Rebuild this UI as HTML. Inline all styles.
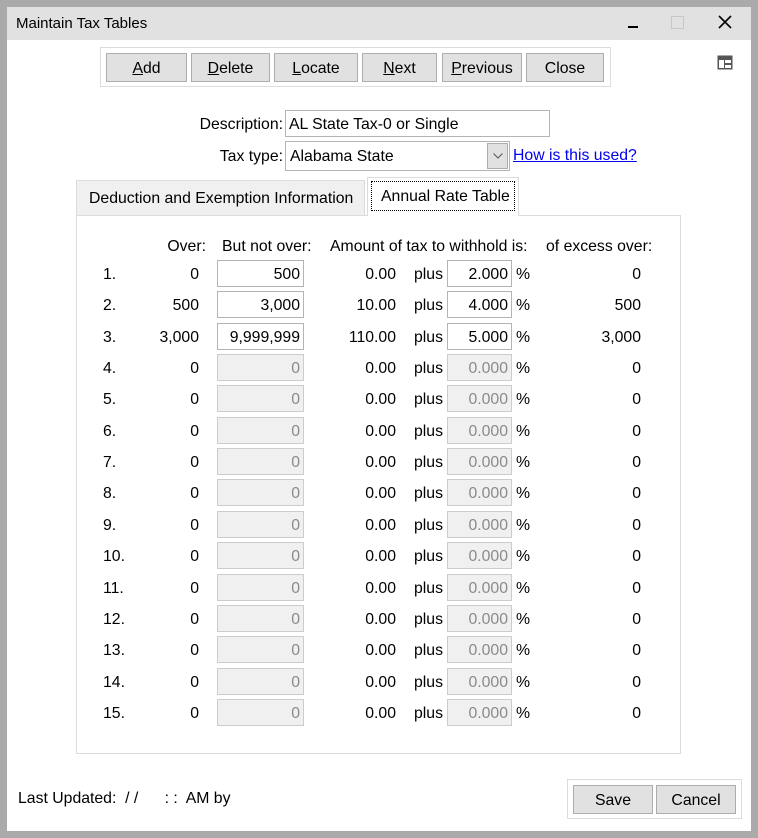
<!DOCTYPE html>
<html><head><meta charset="utf-8"><style>
*{box-sizing:border-box;margin:0;padding:0}
body{width:758px;height:838px;background:#aaaaaa;font-family:"Liberation Sans",sans-serif;font-size:15.8px;color:#000;position:relative;overflow:hidden}
.a{position:absolute;white-space:nowrap}
#win{position:absolute;left:7px;top:7px;width:744px;height:824px;background:#fff}
#title{position:absolute;left:7px;top:7px;width:744px;height:33px;background:#e1e1e1}
.btn{position:absolute;top:53px;height:29px;background:#e1e1e1;border:1px solid #adadad;text-align:center;line-height:30px}
.box{position:absolute;border:1px solid #dcdcdc}
.in{position:absolute;height:27px;border:1px solid #b4b4b4;background:#fff;text-align:right;padding-right:3px;line-height:27px}
.dis{background:#f0f0f0;border-color:#cccccc;color:#8a8a8a}
.r{text-align:right}
</style></head><body>
<div id="win"></div>
<div id="title"></div>
<div class="a" style="left:16px;top:15px;font-size:15px">Maintain Tax Tables</div>
<div class="a" style="left:628px;top:26px;width:10px;height:2px;background:#000"></div>
<div class="a" style="left:671px;top:16px;width:13px;height:13px;border:1px solid #c8c8c8"></div>
<svg class="a" style="left:718px;top:15px" width="14" height="14"><path d="M1 1L13 13M13 1L1 13" stroke="#000" stroke-width="1.6"/></svg>

<div class="box" style="left:100px;top:47px;width:511px;height:40px"></div>
<div class="btn" style="left:106px;width:81px"><u>A</u>dd</div>
<div class="btn" style="left:191px;width:79px"><u>D</u>elete</div>
<div class="btn" style="left:274px;width:84px"><u>L</u>ocate</div>
<div class="btn" style="left:362px;width:75px"><u>N</u>ext</div>
<div class="btn" style="left:442px;width:80px"><u>P</u>revious</div>
<div class="btn" style="left:526px;width:78px">Close</div>
<svg class="a" style="left:717px;top:55px" width="16" height="15"><rect x="0.5" y="0.5" width="15" height="14" fill="#555"/><rect x="2" y="5" width="5" height="8" fill="#fff"/><rect x="8" y="5" width="6" height="3" fill="#fff"/><rect x="8" y="10" width="6" height="3" fill="#fff"/></svg>

<div class="a r" style="left:150px;width:133px;top:116px">Description:</div>
<div class="in" style="left:285px;top:110px;width:265px;text-align:left;padding-left:3px">AL State Tax-0 or Single</div>
<div class="a r" style="left:150px;width:133px;top:148px">Tax type:</div>
<div class="in" style="left:285px;top:141px;width:225px;height:30px;text-align:left;padding-left:4px;line-height:30px">Alabama State</div>
<div class="a" style="left:487px;top:143px;width:21px;height:26px;background:#e1e1e1;border:1px solid #adadad"></div>
<svg class="a" style="left:493px;top:153px" width="10" height="6"><path d="M0.5 0.5L5 5L9.5 0.5" stroke="#555" fill="none"/></svg>
<div class="a" style="left:513px;top:147px;color:#0000ee;text-decoration:underline">How is this used?</div>

<div class="a" style="left:76px;top:180px;width:289px;height:36px;background:#f0f0f0;border:1px solid #dcdcdc"></div>
<div class="a" style="left:89px;top:190px">Deduction and Exemption Information</div>
<div class="box" style="left:76px;top:215px;width:605px;height:539px"></div>
<div class="a" style="left:367px;top:177px;width:152px;height:39px;background:#fff;border:1px solid #dcdcdc;border-bottom:none"></div>
<div class="a" style="left:371px;top:181px;width:144px;height:30px;border:1px dotted #000"></div>
<div class="a" style="left:381px;top:188px">Annual Rate Table</div>

<div class="a r" style="left:140px;width:66px;top:238px">Over:</div>
<div class="a" style="left:222px;top:238px">But not over:</div>
<div class="a" style="left:330px;top:238px">Amount of tax to withhold is:</div>
<div class="a" style="left:546px;top:238px">of excess over:</div>

<div id="rows"></div>
<script>
var d=[["0","500","0.00","2.000","0"],["500","3,000","10.00","4.000","500"],["3,000","9,999,999","110.00","5.000","3,000"]];
var h="";
for(var i=0;i<15;i++){var t=266+i*31.35,y=260+i*31.35;var r=d[i]||["0","0","0.00","0.000","0"];var c=i<3?"":" dis";
h+='<div class="a" style="left:103px;top:'+t+'px">'+(i+1)+'.</div>';
h+='<div class="a r" style="left:120px;width:79px;top:'+t+'px">'+r[0]+'</div>';
h+='<div class="in'+c+'" style="left:217px;top:'+y+'px;width:87px">'+r[1]+'</div>';
h+='<div class="a r" style="left:320px;width:76px;top:'+t+'px">'+r[2]+'</div>';
h+='<div class="a" style="left:414px;top:'+t+'px">plus</div>';
h+='<div class="in'+c+'" style="left:447px;top:'+y+'px;width:65px">'+r[3]+'</div>';
h+='<div class="a" style="left:516px;top:'+t+'px">%</div>';
h+='<div class="a r" style="left:560px;width:81px;top:'+t+'px">'+r[4]+'</div>';}
document.getElementById("rows").innerHTML=h;
</script>

<div class="a" style="left:18px;top:790px">Last Updated:&nbsp; / /&nbsp;&nbsp;&nbsp;&nbsp;&nbsp; : :&nbsp; AM by</div>
<div class="box" style="left:567px;top:779px;width:175px;height:40px"></div>
<div class="btn" style="left:573px;top:785px;width:80px">Save</div>
<div class="btn" style="left:656px;top:785px;width:80px">Cancel</div>
</body></html>
